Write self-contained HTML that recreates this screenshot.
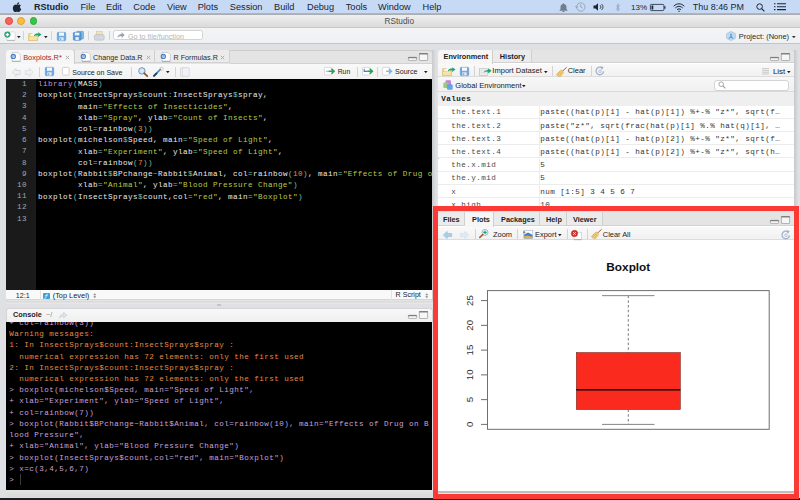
<!DOCTYPE html>
<html><head><meta charset="utf-8"><title>RStudio</title>
<style>
*{margin:0;padding:0;box-sizing:border-box}
html,body{width:800px;height:500px;overflow:hidden;background:#dfe0e4;font-family:"Liberation Sans",sans-serif;position:relative}
.a{position:absolute}
.t{position:absolute;white-space:pre;line-height:1}
svg{position:absolute;overflow:visible}
.code{font-family:"Liberation Mono",monospace;font-size:7.6px;letter-spacing:0.44px;line-height:11.23px;white-space:pre;position:absolute}
.sep{position:absolute;width:1px;background:#d4d4d4}
.ui{font-size:7.3px;color:#222}
.b{font-weight:bold}
</style></head><body>
<div class="a" style="left:0;top:0;width:800px;height:13px;background:#c6daf6"></div><div class="a" style="left:0;top:13px;width:800px;height:1px;background:#a3b6d2"></div><div class="a" style="left:0;top:14px;width:800px;height:1px;background:#acadb1"></div>
<svg style="left:13px;top:1.5px" width="8.5" height="10" viewBox="0 0 17 20"><path d="M12.3 0.5c.1 1.4-.4 2.7-1.2 3.6-.8.9-2 1.6-3.2 1.500-.2-1.300.5-2.700 1.200-3.500C9.900 1.200 11.200.6 12.300.5zM16.400 14.700c-.5 1.100-.7 1.600-1.300 2.500-.9 1.300-2.100 3-3.600 3-1.300 0-1.700-.9-3.500-.9s-2.200.9-3.500.9c-1.500 0-2.600-1.500-3.500-2.800C-1.400 13.700-.6 7.900 2.700 6c1.100-.6 2.300-1 3.300-1 1.300 0 2.100.9 3.300.9 1.100 0 1.800-.9 3.300-.9 1.200 0 2.400.6 3.300 1.700-2.900 1.600-2.400 5.800.5 8z" fill="#1b2633"/></svg>
<div class="t" style="left:34px;top:3.18px;font-size:9.0px;color:#1a2330;font-weight:bold;">RStudio</div>
<div class="t" style="left:80.5px;top:3.01px;font-size:9.2px;color:#1a2330;">File</div>
<div class="t" style="left:106px;top:3.01px;font-size:9.2px;color:#1a2330;">Edit</div>
<div class="t" style="left:133.3px;top:3.01px;font-size:9.2px;color:#1a2330;">Code</div>
<div class="t" style="left:167px;top:3.01px;font-size:9.2px;color:#1a2330;">View</div>
<div class="t" style="left:197.7px;top:3.01px;font-size:9.2px;color:#1a2330;">Plots</div>
<div class="t" style="left:229.8px;top:3.01px;font-size:9.2px;color:#1a2330;">Session</div>
<div class="t" style="left:274px;top:3.01px;font-size:9.2px;color:#1a2330;">Build</div>
<div class="t" style="left:307px;top:3.01px;font-size:9.2px;color:#1a2330;">Debug</div>
<div class="t" style="left:345.7px;top:3.01px;font-size:9.2px;color:#1a2330;">Tools</div>
<div class="t" style="left:378px;top:3.01px;font-size:9.2px;color:#1a2330;">Window</div>
<div class="t" style="left:422.5px;top:3.01px;font-size:9.2px;color:#1a2330;">Help</div>
<svg style="left:559px;top:2.5px" width="9" height="9" viewBox="0 0 9 9"><path d="M4.5 0.3c.4 0 .6.3.6.6 1.500.3 2.400 1.600 2.400 3.200v2.100l1 1.100v.5H.5v-.5l1-1.100V4.100c0-1.600.9-2.900 2.400-3.200 0-.3.200-.6.6-.6zM3.300 8h2.400c0 .6-.5 1-1.200 1S3.300 8.600 3.300 8z" fill="#6f7d8e"/></svg>
<svg style="left:575px;top:2px" width="11" height="10" viewBox="0 0 11 10"><circle cx="5.8" cy="5" r="4.2" fill="none" stroke="#8e9aa8" stroke-width="0.8"/><path d="M5.8 2.300V5l1.800 1.200" fill="none" stroke="#8e9aa8" stroke-width="0.8"/><path d="M0.3 4.200l1.300 1.600 1.300-1.600" fill="none" stroke="#8e9aa8" stroke-width="0.8"/></svg>
<svg style="left:592.5px;top:3px" width="12" height="8" viewBox="0 0 12 8"><path d="M0.5 2.500h2l2.500-2.200v7.400L2.500 5.500h-2z" fill="#1b2633"/><path d="M7 2.200c.6.500.9 1.100.9 1.800s-.3 1.300-.9 1.800M8.600 1c.9.8 1.400 1.900 1.400 3s-.5 2.200-1.400 3" fill="none" stroke="#1b2633" stroke-width="0.8"/></svg>
<svg style="left:615px;top:2.5px" width="6" height="9" viewBox="0 0 6 9"><path d="M1 2.300l3.600 4.100L2.800 8V1l1.800 1.600L1 6.700" fill="none" stroke="#93a0b0" stroke-width="0.8"/></svg>
<div class="t" style="left:631px;top:3.83px;font-size:8.0px;color:#1a2330;">13%</div>
<svg style="left:650px;top:3.5px" width="16" height="7" viewBox="0 0 16 7"><rect x="0.4" y="0.4" width="13.5" height="6.2" rx="1" fill="none" stroke="#1b2633" stroke-width="0.8"/><rect x="1.5" y="1.500" width="1.800" height="4" fill="#1b2633"/><rect x="14.300" y="2.300" width="1.200" height="2.400" fill="#1b2633"/></svg>
<svg style="left:673px;top:2.5px" width="12" height="9" viewBox="0 0 12 9"><path d="M0.600 3.300C3.900 0 8.100 0 11.400 3.300M2.300 5C4.600 2.800 7.400 2.800 9.700 5M4 6.700c1.200-1.100 2.800-1.100 4 0" fill="none" stroke="#1b2633" stroke-width="1"/><circle cx="6" cy="8.200" r="0.7" fill="#1b2633"/></svg>
<div class="t" style="left:692.8px;top:3.12px;font-size:8.95px;color:#1a2330;">Thu 8:46 PM</div>
<svg style="left:756px;top:2.8px" width="9" height="9" viewBox="0 0 9 9"><circle cx="3.600" cy="3.600" r="2.800" fill="none" stroke="#1b2633" stroke-width="1"/><path d="M5.700 5.700L8.400 8.400" stroke="#1b2633" stroke-width="1.200"/></svg>
<svg style="left:774px;top:3.3px" width="12" height="8" viewBox="0 0 12 8"><path d="M0 0.800h1.500M3 0.800h9M0 3.700h1.500M3 3.700h9M0 6.600h1.500M3 6.600h9" stroke="#1b2633" stroke-width="1.100"/></svg>
<div class="a" style="left:0;top:15px;width:800px;height:12.5px;background:linear-gradient(#efefef,#d9d9d9)"></div>
<div class="a" style="left:4.9px;top:17.3px;width:7.8px;height:7.8px;border-radius:50%;background:#fc605b;border:0.5px solid #de4a44"></div>
<div class="a" style="left:17.3px;top:17.3px;width:7.8px;height:7.8px;border-radius:50%;background:#fdbc40;border:0.5px solid #dea034"></div>
<div class="a" style="left:29.700000000000003px;top:17.3px;width:7.8px;height:7.8px;border-radius:50%;background:#34c84a;border:0.5px solid #27aa35"></div>
<div class="t" style="left:384.5px;top:17.27px;font-size:8.3px;color:#4d4d4d;">RStudio</div>
<div class="a" style="left:0;top:27px;width:800px;height:16.6px;background:linear-gradient(#f3f4f5,#eff0f2);border-top:1px solid #c9c9c9;border-bottom:1px solid #c3c4c8"></div>
<svg style="left:3.5px;top:31.3px" width="12" height="10" viewBox="0 0 12 10"><rect x="2.800" y="1" width="8.200" height="8.300" rx="0.600" fill="#fff" stroke="#c2c2c2" stroke-width="0.5"/><path d="M3 9.400h8" stroke="#9a9a9a" stroke-width="0.6"/><circle cx="3.400" cy="3.600" r="3.100" fill="#2aa67c"/><path d="M3.400 2v3.200M1.800 3.600h3.200" stroke="#fff" stroke-width="1.300"/></svg>
<svg style="left:17px;top:35.5px" width="3.6" height="2.2"><path d="M0 0H3.6L1.8 2.2Z" fill="#222"/></svg>
<div class="sep" style="left:23.4px;top:31px;height:9px"></div>
<svg style="left:27.8px;top:32px" width="14" height="9" viewBox="0 0 14 9"><path d="M0.6 1.600h3.400l1 1h4.600v5.900H0.600z" fill="#f0d68e" stroke="#cfae5a" stroke-width="0.4"/><path d="M2.500 2.200h5.500v3H2.500z" fill="#fff"/><path d="M0.2 4.300h9.800l-1 4.200H1z" fill="#f8e3a4" stroke="#cfae5a" stroke-width="0.4"/><path d="M6 3.200c1.200-1.400 2.600-1.800 4.200-1.500V0.300l3.300 2.300-3.300 2.300V3.400C8.800 3.200 7.300 3.500 6 4.200z" fill="#22a36a"/></svg>
<svg style="left:44px;top:35.5px" width="3.6" height="2.2"><path d="M0 0H3.6L1.8 2.2Z" fill="#222"/></svg>
<div class="sep" style="left:50.5px;top:31px;height:9px"></div>
<svg style="left:57px;top:31.8px" width="9" height="9" viewBox="0 0 9 9"><rect x="0.3" y="0.3" width="8.4" height="8.4" rx="1.2" fill="#72a9e0" stroke="#4d86c4" stroke-width="0.5"/><rect x="2" y="0.5" width="5" height="3.3" fill="#f4f8fc"/><rect x="2.4" y="5.3" width="4.2" height="3.2" fill="#e6eef7"/><rect x="3.2" y="6" width="1.1" height="2.2" fill="#72a9e0"/></svg>
<svg style="left:72.5px;top:31px" width="11" height="9.5" viewBox="0 0 11 9.5"><rect x="3.5" y="0.3" width="7" height="7.800" rx="0.8" fill="#7fbde0" stroke="#4d8cc4" stroke-width="0.5"/><rect x="0.3" y="1.300" width="7.800" height="8" rx="1" fill="#5b95d4" stroke="#3f78b8" stroke-width="0.5"/><rect x="1.800" y="1.600" width="4.600" height="2.800" fill="#eef4fb"/><rect x="2.400" y="6" width="3.400" height="3" fill="#dfeaf6"/></svg>
<div class="sep" style="left:87.5px;top:31px;height:9px"></div>
<svg style="left:93.5px;top:31px" width="10.5" height="9.5" viewBox="0 0 10.5 9.5"><rect x="2.3" y="0.3" width="6" height="4" fill="#f1e3b8" stroke="#cbb98a" stroke-width="0.4"/><rect x="0.3" y="3.600" width="9.900" height="5.600" rx="1.600" fill="#d3d8de" stroke="#a9b0b8" stroke-width="0.5"/></svg>
<div class="sep" style="left:108.5px;top:31px;height:9px"></div>
<div class="a" style="left:112.7px;top:30.4px;width:90.5px;height:10px;background:#fff;border:1px solid #d3d3d3;border-radius:2.5px"></div>
<svg style="left:117px;top:32.3px" width="8" height="6.5" viewBox="0 0 8 6.5"><path d="M0.4 6.200C0.8 3.500 2.500 2.100 4.600 2.100V0.300L7.700 3.100 4.600 5.900V4.100C2.800 4 1.500 4.800 0.400 6.200z" fill="#9aa2ac"/></svg>
<div class="t" style="left:128px;top:32.61px;font-size:7.2px;color:#b4b4b4;">Go to file/function</div>
<svg style="left:726px;top:31.3px" width="10" height="10" viewBox="0 0 10 10"><path d="M5 0.300l4.500 2.300v4.800L5 9.700 0.500 7.400V2.600z" fill="#bcd8ef" stroke="#8fb7da" stroke-width="0.4"/><path d="M5 2.600v3.300M5 5.900L2.800 7.500M5 5.900l2.200 1.600" stroke="#3d86c6" stroke-width="1"/></svg>
<div class="t" style="left:738.7px;top:33.15px;font-size:7.5px;color:#2a2a2a;">Project: (None)</div>
<svg style="left:791.5px;top:35.8px" width="3.6" height="2.2"><path d="M0 0H3.6L1.8 2.2Z" fill="#333"/></svg>
<div class="a" style="left:5.5px;top:49.8px;width:427px;height:251px;background:#e4e4e4;border:1px solid #cdcdcd;border-bottom:none;border-radius:3px 3px 0 0"></div>
<div class="a" style="left:6px;top:50.2px;width:69px;height:14px;background:#f6f6f6;border-right:1px solid #cfcfcf;border-radius:3px 3px 0 0"></div>
<div class="a" style="left:75px;top:50.2px;width:80px;height:13.3px;background:#ebebeb;border-right:1px solid #cfcfcf;border-bottom:1px solid #d2d2d2"></div>
<div class="a" style="left:155px;top:50.2px;width:75px;height:13.3px;background:#ebebeb;border-right:1px solid #cfcfcf;border-bottom:1px solid #d2d2d2"></div>
<div class="a" style="left:230px;top:62.6px;width:202px;height:1px;background:#d2d2d2"></div>
<svg style="left:11.2px;top:52.0px" width="10" height="10" viewBox="0 0 10 10"><path d="M1 0.400h6l2.300 2.300v6.600H1z" fill="#fff" stroke="#a8a8a8" stroke-width="0.5"/><path d="M1 9.300h8.300" stroke="#8c8c8c" stroke-width="0.6"/><circle cx="2.300" cy="4.400" r="2.100" fill="#dfe9f5" stroke="#4a7cc0" stroke-width="1.100"/><path d="M1.800 5.600V3.300h0.800c.5 0 .8.3.8.6s-.3.6-.8.6" fill="none" stroke="#3d6fae" stroke-width="0.5"/></svg>
<div class="t" style="left:23.2px;top:53.54px;font-size:7.4px;color:#a81f27;">Boxplots.R*</div>
<svg style="left:65.3px;top:54.8px" width="5" height="5" viewBox="0 0 5 5"><path d="M0.800 0.800l3.400 3.400M4.200 0.800l-3.400 3.400" stroke="#ababab" stroke-width="1"/></svg>
<svg style="left:81.2px;top:52.0px" width="10" height="10" viewBox="0 0 10 10"><path d="M1 0.400h6l2.300 2.300v6.600H1z" fill="#fff" stroke="#a8a8a8" stroke-width="0.5"/><path d="M1 9.300h8.300" stroke="#8c8c8c" stroke-width="0.6"/><circle cx="2.300" cy="4.400" r="2.100" fill="#dfe9f5" stroke="#4a7cc0" stroke-width="1.100"/><path d="M1.800 5.600V3.300h0.800c.5 0 .8.3.8.6s-.3.6-.8.6" fill="none" stroke="#3d6fae" stroke-width="0.5"/></svg>
<div class="t" style="left:93px;top:53.71px;font-size:7.2px;color:#2b2b2b;">Change Data.R</div>
<svg style="left:145.5px;top:54.8px" width="5" height="5" viewBox="0 0 5 5"><path d="M0.800 0.800l3.400 3.400M4.200 0.800l-3.400 3.400" stroke="#ababab" stroke-width="1"/></svg>
<svg style="left:161.2px;top:52.0px" width="10" height="10" viewBox="0 0 10 10"><path d="M1 0.400h6l2.300 2.300v6.600H1z" fill="#fff" stroke="#a8a8a8" stroke-width="0.5"/><path d="M1 9.300h8.300" stroke="#8c8c8c" stroke-width="0.6"/><circle cx="2.300" cy="4.400" r="2.100" fill="#dfe9f5" stroke="#4a7cc0" stroke-width="1.100"/><path d="M1.800 5.600V3.300h0.800c.5 0 .8.3.8.6s-.3.6-.8.6" fill="none" stroke="#3d6fae" stroke-width="0.5"/></svg>
<div class="t" style="left:173.5px;top:53.71px;font-size:7.2px;color:#2b2b2b;">R Formulas.R</div>
<svg style="left:219.5px;top:54.8px" width="5" height="5" viewBox="0 0 5 5"><path d="M0.800 0.800l3.400 3.400M4.200 0.800l-3.400 3.400" stroke="#ababab" stroke-width="1"/></svg>
<svg style="left:408px;top:53.1px" width="20" height="8" viewBox="0 0 20 8"><rect x="0.400" y="4.300" width="8.200" height="3.100" rx="0.500" fill="#fbfbfb" stroke="#9a9a9a" stroke-width="0.700"/><rect x="0.100" y="3.900" width="8.800" height="1.400" rx="0.500" fill="#808080"/><rect x="11.400" y="0.500" width="8.200" height="7" rx="0.500" fill="#f6f6f6" stroke="#9a9a9a" stroke-width="0.700"/><rect x="11.100" y="0.100" width="8.800" height="1.500" rx="0.500" fill="#808080"/></svg>
<div class="a" style="left:6px;top:63.8px;width:426px;height:15px;background:linear-gradient(#f9f9f9,#f1f1f1)"></div>
<svg style="left:12.4px;top:67.5px" width="8.5" height="8" viewBox="0 0 8.5 8"><path d="M0.4 4L4 0.5v2h4.100v4H4v2z" fill="#eef0f2" stroke="#c2c7cc" stroke-width="0.6"/></svg>
<svg style="left:24.8px;top:67.5px" width="8.5" height="8" viewBox="0 0 8.5 8"><path d="M8.100 4L4.500 0.500v2H0.400v4h4.100v2z" fill="#eef0f2" stroke="#d0d4d8" stroke-width="0.6"/></svg>
<div class="sep" style="left:39.3px;top:66.5px;height:10px"></div>
<svg style="left:45.4px;top:67.3px" width="9" height="9" viewBox="0 0 9 9"><rect x="0.3" y="0.3" width="8.4" height="8.4" rx="1.2" fill="#72a9e0" stroke="#4d86c4" stroke-width="0.5"/><rect x="2" y="0.5" width="5" height="3.3" fill="#f4f8fc"/><rect x="2.4" y="5.3" width="4.2" height="3.2" fill="#e6eef7"/><rect x="3.2" y="6" width="1.1" height="2.2" fill="#72a9e0"/></svg>
<svg style="left:62.3px;top:67px" width="7.5" height="8.5" viewBox="0 0 7.5 8.5"><rect x="0.400" y="0.400" width="6.700" height="7.700" rx="1.200" fill="#fff" stroke="#b4b4b4" stroke-width="0.6"/></svg>
<div class="t" style="left:72.3px;top:68.63px;font-size:7.05px;color:#222;">Source on Save</div>
<div class="sep" style="left:131px;top:66.5px;height:10px"></div>
<svg style="left:137.5px;top:66.8px" width="10" height="10" viewBox="0 0 10 10"><circle cx="3.900" cy="3.900" r="3.200" fill="#d5e7f7" stroke="#5d89b5" stroke-width="0.9"/><path d="M6.200 6.200l3 3" stroke="#8a5a2c" stroke-width="1.800" stroke-linecap="round"/></svg>
<svg style="left:153px;top:66.3px" width="11" height="10.5" viewBox="0 0 11 10.5"><path d="M1 9.800L7.300 3.500" stroke="#3b85c8" stroke-width="1.700" stroke-linecap="round"/><path d="M1 9.800L3.500 7.300" stroke="#2a3c55" stroke-width="1.700" stroke-linecap="round"/><path d="M8.600 0.400v1.600M8.600 3.600v1.600M6.200 2.800h1.600M9.400 2.800h1.600M6.900 1.100l.8.8M9.500 3.700l.8.8M10.300 1.100l-.8.8" stroke="#f2a078" stroke-width="0.6"/></svg>
<svg style="left:165.5px;top:71px" width="3.6" height="2.2"><path d="M0 0H3.6L1.8 2.2Z" fill="#222"/></svg>
<div class="sep" style="left:175px;top:66.5px;height:10px"></div>
<svg style="left:180px;top:66.5px" width="10" height="10" viewBox="0 0 10 10"><rect x="0.500" y="0.700" width="8.800" height="8.600" rx="1.200" fill="#eef2f8" stroke="#c4c8ce" stroke-width="0.6"/><path d="M2.300 0.700v8.600" stroke="#e3a6a6" stroke-width="0.4"/></svg>
<svg style="left:323.5px;top:67.4px" width="13" height="8.5" viewBox="0 0 13 8.5"><rect x="0.400" y="0.400" width="7.400" height="7.600" rx="0.800" fill="#fff" stroke="#b8b8b8" stroke-width="0.5"/><path d="M1.800 4.200h3" stroke="#8fb8e0" stroke-width="1.100"/><path d="M4.600 4.200h4.300M7.400 1.700l2.700 2.500-2.700 2.500" fill="none" stroke="#25a24a" stroke-width="1.500"/></svg>
<div class="t" style="left:337.7px;top:68.84px;font-size:6.8px;color:#222;">Run</div>
<div class="sep" style="left:356.7px;top:66.5px;height:10px"></div>
<svg style="left:361.5px;top:67.4px" width="12.5" height="8.5" viewBox="0 0 12.5 8.5"><rect x="0.400" y="0.400" width="7.400" height="7.600" rx="0.800" fill="#fff" stroke="#b8b8b8" stroke-width="0.5"/><path d="M2.200 1.800v2.600h3" fill="none" stroke="#3b7fc4" stroke-width="1.100"/><path d="M5.200 4.300h4.300M7.800 1.800l2.600 2.500-2.600 2.500" fill="none" stroke="#25a24a" stroke-width="1.500"/></svg>
<div class="sep" style="left:377.3px;top:66.5px;height:10px"></div>
<svg style="left:381.5px;top:67.4px" width="12.5" height="8.5" viewBox="0 0 12.5 8.5"><rect x="0.400" y="0.400" width="7.400" height="7.600" rx="0.800" fill="#fff" stroke="#b8b8b8" stroke-width="0.5"/><path d="M4.200 4.200h4.300M6.900 1.800l2.600 2.400-2.600 2.400" fill="none" stroke="#7fb6e6" stroke-width="1.500"/></svg>
<div class="t" style="left:395px;top:68.59px;font-size:7.1px;color:#222;">Source</div>
<svg style="left:424.3px;top:71px" width="3.6" height="2.2"><path d="M0 0H3.6L1.8 2.2Z" fill="#222"/></svg>
<div class="a" style="left:6px;top:290px;width:426px;height:10.2px;background:#f9f9f9;border-bottom:1px solid #d6d6d6"></div>
<div class="a" style="left:6px;top:300.5px;width:426px;height:3px;background:linear-gradient(#d8d8d8,#e9e9e9)"></div>
<div class="t" style="left:15.8px;top:292.41px;font-size:7.2px;color:#1e1e1e;">12:1</div>
<div class="sep" style="left:39.6px;top:290px;height:10px;background:#e2e2e2"></div>
<div class="a" style="left:42.9px;top:292.6px;width:6.8px;height:6px;background:#3aa3d8;border-radius:1px"></div>
<svg style="left:42.9px;top:292.6px" width="7" height="6.2" viewBox="0 0 7 6.2"><path d="M4.900 1.300c-.5-.3-1.100-.1-1.300.5L2.500 5.200c-.2.600-.7.800-1.200.6M2.300 2.600h2.200" fill="none" stroke="#fff" stroke-width="0.7"/></svg>
<div class="t" style="left:52.7px;top:292.04px;font-size:7.4px;color:#222;">(Top Level)</div>
<svg style="left:93px;top:292.8px" width="3.5" height="5.5" viewBox="0 0 3.5 5.5"><path d="M0.200 2.200L1.750 0.300 3.300 2.200zM0.200 3.300L1.750 5.200 3.300 3.300z" fill="#8a8a8a"/></svg>
<div class="sep" style="left:391.2px;top:290px;height:10px;background:#e2e2e2"></div>
<div class="t" style="left:395.6px;top:292.29px;font-size:7.1px;color:#222;">R Script</div>
<svg style="left:424.5px;top:292.8px" width="3.5" height="5.5" viewBox="0 0 3.5 5.5"><path d="M0.200 2.200L1.750 0.300 3.300 2.200zM0.200 3.300L1.750 5.200 3.300 3.300z" fill="#8a8a8a"/></svg>
<div class="a" style="left:6px;top:79px;width:426px;height:211px;background:#000;overflow:hidden">
<div class="a" style="left:0;top:0;width:29.8px;height:211px;background:#1a1a1a"></div>
<div class="code" style="left:0;top:-0.1px;width:21px;text-align:right;color:#a4a7ae">1
2
3
4
5
6
7
8
9
10
11
12
13</div>
<div class="code" style="left:32px;top:0.2px;color:#eaeaea"><span style="color:#c397d8">library</span><span style="color:#70c0b1">(</span>MASS<span style="color:#70c0b1">)</span>
boxplot<span style="color:#70c0b1">(</span>InsectSprays<span style="color:#70c0b1">$</span>count<span style="color:#70c0b1">:</span>InsectSprays<span style="color:#70c0b1">$</span>spray,
        main<span style="color:#70c0b1">=</span><span style="color:#b9ca4a">"Effects of Insecticides"</span>,
        xlab<span style="color:#70c0b1">=</span><span style="color:#b9ca4a">"Spray"</span>, ylab<span style="color:#70c0b1">=</span><span style="color:#b9ca4a">"Count of Insects"</span>,
        col<span style="color:#70c0b1">=</span>rainbow<span style="color:#70c0b1">(</span><span style="color:#e78c45">3</span><span style="color:#70c0b1">))</span>
boxplot<span style="color:#70c0b1">(</span>michelson<span style="color:#70c0b1">$</span>Speed, main<span style="color:#70c0b1">=</span><span style="color:#b9ca4a">"Speed of Light"</span>,
        xlab<span style="color:#70c0b1">=</span><span style="color:#b9ca4a">"Experiment"</span>, ylab<span style="color:#70c0b1">=</span><span style="color:#b9ca4a">"Speed of Light"</span>,
        col<span style="color:#70c0b1">=</span>rainbow<span style="color:#70c0b1">(</span><span style="color:#e78c45">7</span><span style="color:#70c0b1">))</span>
boxplot<span style="color:#70c0b1">(</span>Rabbit<span style="color:#70c0b1">$</span>BPchange<span style="color:#70c0b1">~</span>Rabbit<span style="color:#70c0b1">$</span>Animal, col<span style="color:#70c0b1">=</span>rainbow<span style="color:#70c0b1">(</span><span style="color:#e78c45">10</span><span style="color:#70c0b1">)</span>, main<span style="color:#70c0b1">=</span><span style="color:#b9ca4a">"Effects of Drug on Blood Pressure"</span>,
        xlab<span style="color:#70c0b1">=</span><span style="color:#b9ca4a">"Animal"</span>, ylab<span style="color:#70c0b1">=</span><span style="color:#b9ca4a">"Blood Pressure Change"</span><span style="color:#70c0b1">)</span>
boxplot<span style="color:#70c0b1">(</span>InsectSprays<span style="color:#70c0b1">$</span>count,col<span style="color:#70c0b1">=</span><span style="color:#b9ca4a">"red"</span>, main<span style="color:#70c0b1">=</span><span style="color:#b9ca4a">"Boxplot"</span><span style="color:#70c0b1">)</span></div>
</div>
<div class="a" style="left:5.5px;top:307.7px;width:427px;height:14px;background:linear-gradient(#f8f8f8,#efefef);border:1px solid #d4d4d4;border-bottom:none;border-radius:3px 3px 0 0"></div>
<div class="t" style="left:13px;top:311.32px;font-size:7.3px;color:#1e1e1e;font-weight:bold;">Console</div>
<div class="t" style="left:46px;top:311.32px;font-size:7.3px;color:#8c8c8c;">~/</div>
<svg style="left:59.4px;top:311.6px" width="8.5" height="6.5" viewBox="0 0 8.5 6.5"><path d="M0.400 6.200C0.800 3.500 2.500 2.100 4.600 2.100V0.300L8 3.100 4.600 5.900V4.100C2.800 4 1.500 4.800 0.400 6.200z" fill="#dfe6ee" stroke="#b7c2cf" stroke-width="0.5"/></svg>
<svg style="left:408px;top:311px" width="20" height="8" viewBox="0 0 20 8"><rect x="0.400" y="4.300" width="8.200" height="3.100" rx="0.500" fill="#fbfbfb" stroke="#9a9a9a" stroke-width="0.700"/><rect x="0.100" y="3.900" width="8.800" height="1.400" rx="0.500" fill="#808080"/><rect x="11.400" y="0.500" width="8.200" height="7" rx="0.500" fill="#f6f6f6" stroke="#9a9a9a" stroke-width="0.700"/><rect x="11.100" y="0.100" width="8.800" height="1.500" rx="0.500" fill="#808080"/></svg>
<div class="a" style="left:6px;top:321.7px;width:426px;height:168.5px;background:#000;overflow:hidden">
<div class="code" style="left:3.3px;top:-3.9px;color:#c9a1dc"><span style="color:#c9a1dc">+ col=rainbow(3))</span>
<span style="color:#e38b47">Warning messages:</span>
<span style="color:#e38b47">1: In InsectSprays$count:InsectSprays$spray :</span>
<span style="color:#e38b47">  numerical expression has 72 elements: only the first used</span>
<span style="color:#e38b47">2: In InsectSprays$count:InsectSprays$spray :</span>
<span style="color:#e38b47">  numerical expression has 72 elements: only the first used</span>
<span style="color:#c9a1dc">&gt; boxplot(michelson$Speed, main="Speed of Light",</span>
<span style="color:#c9a1dc">+ xlab="Experiment", ylab="Speed of Light",</span>
<span style="color:#c9a1dc">+ col=rainbow(7))</span>
<span style="color:#c9a1dc">&gt; boxplot(Rabbit$BPchange~Rabbit$Animal, col=rainbow(10), main="Effects of Drug on B</span>
<span style="color:#c9a1dc">lood Pressure",</span>
<span style="color:#c9a1dc">+ xlab="Animal", ylab="Blood Pressure Change")</span>
<span style="color:#c9a1dc">&gt; boxplot(InsectSprays$count,col="red", main="Boxplot")</span>
<span style="color:#c9a1dc">&gt; x=c(3,4,5,6,7)</span>
<span style="color:#c9a1dc">&gt; </span></div>
<div class="a" style="left:13.6px;top:152.5px;width:1px;height:11.3px;background:#3a3a3a"></div>
</div>
<div class="a" style="left:6px;top:490.2px;width:426px;height:7.3px;background:linear-gradient(#e4e4e4,#dadada)"></div>
<div class="a" style="left:437.6px;top:49.8px;width:357px;height:160px;background:#fff;border:1px solid #cdcdcd;border-radius:3px 3px 0 0"></div>
<div class="a" style="left:438px;top:50.2px;width:356px;height:13.3px;background:#e4e4e4;border-bottom:1px solid #d2d2d2;border-radius:3px 3px 0 0"></div>
<div class="a" style="left:438px;top:50.2px;width:55.3px;height:14px;background:#f6f6f6;border-right:1px solid #cfcfcf;border-radius:3px 0 0 0"></div>
<div class="a" style="left:493.3px;top:50.2px;width:38.3px;height:13.3px;background:#ebebeb;border-right:1px solid #cfcfcf;border-bottom:1px solid #d2d2d2"></div>
<div class="t" style="left:443.5px;top:52.80px;font-size:7.33px;color:#1e1e1e;font-weight:bold;">Environment</div>
<div class="t" style="left:499.8px;top:52.80px;font-size:7.33px;color:#1e1e1e;font-weight:bold;">History</div>
<svg style="left:770px;top:53.4px" width="20" height="8" viewBox="0 0 20 8"><rect x="0.400" y="4.300" width="8.200" height="3.100" rx="0.500" fill="#fbfbfb" stroke="#9a9a9a" stroke-width="0.700"/><rect x="0.100" y="3.900" width="8.800" height="1.400" rx="0.500" fill="#808080"/><rect x="11.400" y="0.500" width="8.200" height="7" rx="0.500" fill="#f6f6f6" stroke="#9a9a9a" stroke-width="0.700"/><rect x="11.100" y="0.100" width="8.800" height="1.500" rx="0.500" fill="#808080"/></svg>
<div class="a" style="left:438px;top:63.5px;width:356px;height:13.5px;background:linear-gradient(#f9f9f9,#f1f1f1);border-bottom:1px solid #dcdcdc"></div>
<svg style="left:442px;top:66.7px" width="14" height="9" viewBox="0 0 14 9"><path d="M0.6 1.600h3.400l1 1h4.600v5.900H0.600z" fill="#f0d68e" stroke="#cfae5a" stroke-width="0.4"/><path d="M2.500 2.200h5.500v3H2.500z" fill="#fff"/><path d="M0.2 4.300h9.800l-1 4.200H1z" fill="#f8e3a4" stroke="#cfae5a" stroke-width="0.4"/><path d="M6 3.200c1.200-1.400 2.600-1.800 4.200-1.500V0.300l3.300 2.300-3.300 2.300V3.400C8.800 3.200 7.300 3.500 6 4.200z" fill="#22a36a"/></svg>
<svg style="left:460px;top:67px" width="9" height="9" viewBox="0 0 9 9"><rect x="0.3" y="0.3" width="8.4" height="8.4" rx="1.2" fill="#72a9e0" stroke="#4d86c4" stroke-width="0.5"/><rect x="2" y="0.5" width="5" height="3.3" fill="#f4f8fc"/><rect x="2.4" y="5.3" width="4.2" height="3.2" fill="#e6eef7"/><rect x="3.2" y="6" width="1.1" height="2.2" fill="#72a9e0"/></svg>
<div class="sep" style="left:474px;top:66px;height:10px"></div>
<svg style="left:478.5px;top:66.5px" width="13" height="9" viewBox="0 0 13 9"><rect x="0.400" y="1.800" width="8" height="6.800" fill="#f3f3f3" stroke="#a8a8a8" stroke-width="0.5"/><path d="M0.400 3.800h8M0.400 5.800h8M3 1.800v6.800M5.600 1.800v6.800" stroke="#cfcfcf" stroke-width="0.4"/><path d="M4.500 5.500c1-1.800 2.600-2.600 4.600-2.600V1.200l3.500 2.600-3.500 2.600V4.600C7.500 4.600 6 4.900 4.500 5.500z" fill="#22a36a"/></svg>
<div class="t" style="left:492.3px;top:67.11px;font-size:7.55px;color:#222;">Import Dataset</div>
<svg style="left:544px;top:70.8px" width="3.6" height="2.2"><path d="M0 0H3.6L1.8 2.2Z" fill="#222"/></svg>
<div class="sep" style="left:551.7px;top:66px;height:10px"></div>
<svg style="left:555.6px;top:66.5px" width="11" height="10" viewBox="0 0 11 10"><path d="M10.600 0.300L6.300 4.400" stroke="#b4572f" stroke-width="1"/><path d="M6.900 3.700L5 2.900 0.300 7.600c1 1.300 2.600 2.200 4 2.300L7.500 5.800z" fill="#f0cf78" stroke="#c79a3c" stroke-width="0.4"/><path d="M1.500 8.400l4-4M3 9.400l3.400-4.200M0.900 7.300l3.800-3.800" stroke="#c79a3c" stroke-width="0.4"/></svg>
<div class="t" style="left:567.7px;top:67.15px;font-size:7.5px;color:#222;">Clear</div>
<div class="sep" style="left:590.7px;top:66px;height:10px"></div>
<svg style="left:595px;top:66.2px" width="10" height="10" viewBox="0 0 10 10"><path d="M8.600 5.400A3.800 3.800 0 1 1 6.500 1.500" fill="none" stroke="#9fb2ca" stroke-width="1.300"/><path d="M5.200 0.200l3.600 0.800-2 3z" fill="#9fb2ca"/><circle cx="5" cy="5.200" r="1.300" fill="none" stroke="#9fb2ca" stroke-width="0.7"/></svg>
<svg style="left:762px;top:68.2px" width="7" height="6.5" viewBox="0 0 7 6.5"><path d="M0 0.600h7M0 2.400h7M0 4.200h7M0 6h7" stroke="#c9c9c9" stroke-width="1"/></svg>
<div class="t" style="left:772.9px;top:67.63px;font-size:8.0px;color:#222;">List</div>
<svg style="left:787.3px;top:71.3px" width="3.6" height="2.2"><path d="M0 0H3.6L1.8 2.2Z" fill="#222"/></svg>
<div class="a" style="left:438px;top:77px;width:356px;height:15.3px;background:linear-gradient(#f7f7f7,#f0f0f0);border-bottom:1px solid #dadada"></div>
<svg style="left:443px;top:80px" width="10" height="10" viewBox="0 0 10 10"><rect x="2.500" y="0.300" width="5.500" height="5.500" rx="1.200" fill="#c27fdc"/><rect x="0.300" y="2.600" width="5.500" height="5.500" rx="1.200" fill="#9ccb7c"/><rect x="4" y="4.200" width="5.700" height="5.500" rx="1.200" fill="#5f9ee6" opacity="0.95"/></svg>
<div class="t" style="left:455.3px;top:82.41px;font-size:7.55px;color:#222;">Global Environment</div>
<svg style="left:522px;top:85.4px" width="3.6" height="2.2"><path d="M0 0H3.6L1.8 2.2Z" fill="#222"/></svg>
<div class="a" style="left:714.4px;top:79.5px;width:74.4px;height:11px;background:#fff;border:1px solid #d3d3d3;border-radius:3px"></div>
<svg style="left:718px;top:81.2px" width="8" height="8" viewBox="0 0 8 8"><circle cx="3.200" cy="3.200" r="2.300" fill="none" stroke="#9c9c9c" stroke-width="0.9"/><path d="M4.900 4.900L7.400 7.400" stroke="#9c9c9c" stroke-width="1.200"/></svg>
<div class="a" style="left:438px;top:92.3px;width:356px;height:13.4px;background:#efefef"></div>
<div class="code" style="left:441.2px;top:94.2px;font-weight:bold;color:#222">Values</div>
<div class="a" style="left:438px;top:105.7px;width:356px;height:13.2px;background:#fff;border-bottom:1px solid #ececec"></div>
<div class="a" style="left:539px;top:105.7px;width:1px;height:13.2px;background:#ececec"></div>
<div class="code" style="left:451.2px;top:107.30px;color:#4a4a4a">the.text.1</div>
<div class="code" style="left:540.3px;top:107.30px;color:#333">paste((hat(p)[1] - hat(p)[1]) %+-% "z*", sqrt(f…</div>
<div class="a" style="left:438px;top:118.9px;width:356px;height:13.2px;background:#fff;border-bottom:1px solid #ececec"></div>
<div class="a" style="left:539px;top:118.9px;width:1px;height:13.2px;background:#ececec"></div>
<div class="code" style="left:451.2px;top:120.50px;color:#4a4a4a">the.text.2</div>
<div class="code" style="left:540.3px;top:120.50px;color:#333">paste("z*", sqrt(frac(hat(p)[1] %.% hat(q)[1], …</div>
<div class="a" style="left:438px;top:132.1px;width:356px;height:13.2px;background:#fff;border-bottom:1px solid #ececec"></div>
<div class="a" style="left:539px;top:132.1px;width:1px;height:13.2px;background:#ececec"></div>
<div class="code" style="left:451.2px;top:133.70px;color:#4a4a4a">the.text.3</div>
<div class="code" style="left:540.3px;top:133.70px;color:#333">paste((hat(p)[1] - hat(p)[2]) %+-% "z*", sqrt(f…</div>
<div class="a" style="left:438px;top:145.3px;width:356px;height:13.2px;background:#fff;border-bottom:1px solid #ececec"></div>
<div class="a" style="left:539px;top:145.3px;width:1px;height:13.2px;background:#ececec"></div>
<div class="code" style="left:451.2px;top:146.90px;color:#4a4a4a">the.text.4</div>
<div class="code" style="left:540.3px;top:146.90px;color:#333">paste((hat(p)[1] - hat(p)[2]) %+-% "z*", sqrt(h…</div>
<div class="a" style="left:438px;top:158.5px;width:356px;height:13.2px;background:#fff;border-bottom:1px solid #ececec"></div>
<div class="a" style="left:539px;top:158.5px;width:1px;height:13.2px;background:#ececec"></div>
<div class="code" style="left:451.2px;top:160.10px;color:#4a4a4a">the.x.mid</div>
<div class="code" style="left:540.3px;top:160.10px;color:#333">5</div>
<div class="a" style="left:438px;top:171.7px;width:356px;height:13.2px;background:#fff;border-bottom:1px solid #ececec"></div>
<div class="a" style="left:539px;top:171.7px;width:1px;height:13.2px;background:#ececec"></div>
<div class="code" style="left:451.2px;top:173.30px;color:#4a4a4a">the.y.mid</div>
<div class="code" style="left:540.3px;top:173.30px;color:#333">5</div>
<div class="a" style="left:438px;top:184.89999999999998px;width:356px;height:13.2px;background:#fff;border-bottom:1px solid #ececec"></div>
<div class="a" style="left:539px;top:184.89999999999998px;width:1px;height:13.2px;background:#ececec"></div>
<div class="code" style="left:451.2px;top:186.50px;color:#4a4a4a">x</div>
<div class="code" style="left:540.3px;top:186.50px;color:#333">num [1:5] 3 4 5 6 7</div>
<div class="a" style="left:438px;top:198.1px;width:356px;height:13.2px;background:#fff;border-bottom:1px solid #ececec"></div>
<div class="a" style="left:539px;top:198.1px;width:1px;height:13.2px;background:#ececec"></div>
<div class="code" style="left:451.2px;top:199.70px;color:#4a4a4a">x.high</div>
<div class="code" style="left:540.3px;top:199.70px;color:#333">10</div>
<div class="a" style="left:438px;top:212px;width:356px;height:282px;background:#fff"></div>
<div class="a" style="left:438px;top:212px;width:356px;height:14.3px;background:#e4e4e4;border-bottom:1px solid #d2d2d2"></div>
<div class="a" style="left:438px;top:212px;width:27.30000000000001px;height:14.3px;background:#ebebeb;border-right:1px solid #cfcfcf;border-bottom:1px solid #d2d2d2"></div>
<div class="t" style="left:443px;top:216.10px;font-size:7.33px;color:#1e1e1e;font-weight:bold;">Files</div>
<div class="a" style="left:465.3px;top:212px;width:28.69999999999999px;height:15px;background:#f6f6f6;border-right:1px solid #cfcfcf"></div>
<div class="t" style="left:472px;top:216.10px;font-size:7.33px;color:#1e1e1e;font-weight:bold;">Plots</div>
<div class="a" style="left:494px;top:212px;width:45.60000000000002px;height:14.3px;background:#ebebeb;border-right:1px solid #cfcfcf;border-bottom:1px solid #d2d2d2"></div>
<div class="t" style="left:501px;top:216.10px;font-size:7.33px;color:#1e1e1e;font-weight:bold;">Packages</div>
<div class="a" style="left:539.6px;top:212px;width:27.0px;height:14.3px;background:#ebebeb;border-right:1px solid #cfcfcf;border-bottom:1px solid #d2d2d2"></div>
<div class="t" style="left:546px;top:216.10px;font-size:7.33px;color:#1e1e1e;font-weight:bold;">Help</div>
<div class="a" style="left:566.6px;top:212px;width:36.0px;height:14.3px;background:#ebebeb;border-right:1px solid #cfcfcf;border-bottom:1px solid #d2d2d2"></div>
<div class="t" style="left:573px;top:216.10px;font-size:7.33px;color:#1e1e1e;font-weight:bold;">Viewer</div>
<svg style="left:770px;top:216.2px" width="20" height="8" viewBox="0 0 20 8"><rect x="0.400" y="4.300" width="8.200" height="3.100" rx="0.500" fill="#fbfbfb" stroke="#9a9a9a" stroke-width="0.700"/><rect x="0.100" y="3.900" width="8.800" height="1.400" rx="0.500" fill="#808080"/><rect x="11.400" y="0.500" width="8.200" height="7" rx="0.500" fill="#f6f6f6" stroke="#9a9a9a" stroke-width="0.700"/><rect x="11.100" y="0.100" width="8.800" height="1.500" rx="0.500" fill="#808080"/></svg>
<div class="a" style="left:438px;top:226.5px;width:356px;height:13.5px;background:linear-gradient(#f9f9f9,#f1f1f1);border-bottom:1px solid #dcdcdc"></div>
<svg style="left:443px;top:230.8px" width="9" height="8" viewBox="0 0 9 8"><path d="M0.300 4L4.200 0.400v2.100h4.500v3H4.200v2.100z" fill="#a8d0ec" stroke="#7fb0d6" stroke-width="0.5"/></svg>
<svg style="left:460.3px;top:230.8px" width="9" height="8" viewBox="0 0 9 8"><path d="M8.700 4L4.800 0.400v2.100H0.300v3h4.500v2.100z" fill="#dcebf6" stroke="#c4dbee" stroke-width="0.5"/></svg>
<div class="sep" style="left:474.5px;top:229px;height:10px"></div>
<svg style="left:479.3px;top:229.4px" width="10" height="9" viewBox="0 0 10 9"><circle cx="6" cy="3.400" r="3" fill="#e3f1fb" stroke="#8aa2b8" stroke-width="0.7"/><path d="M6 1.700v3.400M4.300 3.400h3.400" stroke="#1aa36b" stroke-width="1.100"/><path d="M3.800 5.600L0.800 8.400" stroke="#a0622c" stroke-width="1.600" stroke-linecap="round"/></svg>
<div class="t" style="left:493px;top:231.21px;font-size:7.43px;color:#222;">Zoom</div>
<div class="sep" style="left:517.4px;top:229px;height:10px"></div>
<svg style="left:522.5px;top:229.8px" width="10" height="9" viewBox="0 0 10 9"><rect x="0.800" y="0.400" width="9" height="8" fill="#fff" stroke="#9ba7b3" stroke-width="0.5"/><path d="M1.200 4.500L5 2.500l4.400 2.300v3.400H1.200z" fill="#3e7fd0"/><path d="M1.200 6.600l3-1.200 5.200 1.400v1.400H1.200z" fill="#e4b04a"/><path d="M0 2.300h2.600M1.300 1v2.600" stroke="#555" stroke-width="0.6"/></svg>
<div class="t" style="left:535px;top:231.19px;font-size:7.45px;color:#222;">Export</div>
<svg style="left:558.2px;top:234.3px" width="3.6" height="2.2"><path d="M0 0H3.6L1.8 2.2Z" fill="#222"/></svg>
<div class="sep" style="left:566.5px;top:229px;height:10px"></div>
<svg style="left:571px;top:229.5px" width="11" height="10" viewBox="0 0 11 10"><rect x="3" y="2.200" width="7.600" height="7.400" fill="#fff" stroke="#b8b8b8" stroke-width="0.5"/><path d="M3 9.700h7.600" stroke="#8a8a8a" stroke-width="0.6"/><circle cx="3.500" cy="3.500" r="3.200" fill="#d9302c"/><circle cx="3.500" cy="3.500" r="3.200" fill="none" stroke="#a81d1d" stroke-width="0.4"/><path d="M2.300 2.300l2.400 2.400M4.700 2.300L2.300 4.700" stroke="#fff" stroke-width="1"/></svg>
<div class="sep" style="left:586.5px;top:229px;height:10px"></div>
<svg style="left:590.5px;top:229.3px" width="11" height="10" viewBox="0 0 11 10"><path d="M10.600 0.300L6.300 4.400" stroke="#b4572f" stroke-width="1"/><path d="M6.900 3.700L5 2.900 0.300 7.600c1 1.300 2.600 2.200 4 2.300L7.500 5.800z" fill="#f0cf78" stroke="#c79a3c" stroke-width="0.4"/><path d="M1.500 8.400l4-4M3 9.400l3.400-4.200M0.900 7.300l3.800-3.800" stroke="#c79a3c" stroke-width="0.4"/></svg>
<div class="t" style="left:602.8px;top:231.22px;font-size:7.42px;color:#222;">Clear All</div>
<svg style="left:781px;top:229.6px" width="10" height="10" viewBox="0 0 10 10"><path d="M8.600 5.400A3.800 3.800 0 1 1 6.500 1.500" fill="none" stroke="#9fb2ca" stroke-width="1.300"/><path d="M5.200 0.200l3.600 0.800-2 3z" fill="#9fb2ca"/><circle cx="5" cy="5.200" r="1.300" fill="none" stroke="#9fb2ca" stroke-width="0.7"/></svg>
<svg style="left:0;top:0" width="800" height="500" viewBox="0 0 800 500"><rect x="487.5" y="290.6" width="281.7" height="138.7" fill="none" stroke="#6e6e6e" stroke-width="1"/><path d="M481 424.40H487.5" stroke="#6e6e6e" stroke-width="1"/><text transform="translate(473.3 424.40) rotate(-90)" text-anchor="middle" font-family="Liberation Sans" font-size="9.6" fill="#2e2e2e">0</text><path d="M481 399.64H487.5" stroke="#6e6e6e" stroke-width="1"/><text transform="translate(473.3 399.64) rotate(-90)" text-anchor="middle" font-family="Liberation Sans" font-size="9.6" fill="#2e2e2e">5</text><path d="M481 374.88H487.5" stroke="#6e6e6e" stroke-width="1"/><text transform="translate(473.3 374.88) rotate(-90)" text-anchor="middle" font-family="Liberation Sans" font-size="9.6" fill="#2e2e2e">10</text><path d="M481 350.12H487.5" stroke="#6e6e6e" stroke-width="1"/><text transform="translate(473.3 350.12) rotate(-90)" text-anchor="middle" font-family="Liberation Sans" font-size="9.6" fill="#2e2e2e">15</text><path d="M481 325.36H487.5" stroke="#6e6e6e" stroke-width="1"/><text transform="translate(473.3 325.36) rotate(-90)" text-anchor="middle" font-family="Liberation Sans" font-size="9.6" fill="#2e2e2e">20</text><path d="M481 300.60H487.5" stroke="#6e6e6e" stroke-width="1"/><text transform="translate(473.3 300.60) rotate(-90)" text-anchor="middle" font-family="Liberation Sans" font-size="9.6" fill="#2e2e2e">25</text><rect x="576.3" y="352.60" width="104" height="56.95" fill="#fa2a1f" stroke="#7a2a20" stroke-width="0.6"/><path d="M576.3 389.74H680.3" stroke="#000" stroke-width="1.6"/><path d="M628.3 295.65V352.60M628.3 409.54V424.40" stroke="#555" stroke-width="0.8" stroke-dasharray="2.5 2.2"/><path d="M602 295.65H654.5M602 424.40H654.5" stroke="#777" stroke-width="0.9"/><text x="628.3" y="270.8" text-anchor="middle" font-family="Liberation Sans" font-size="11.8" font-weight="bold" fill="#111">Boxplot</text></svg>
<div class="a" style="left:438px;top:491.3px;width:356px;height:1.5px;background:#bdbdbd"></div>
<div class="a" style="left:438px;top:492.8px;width:356px;height:1.5px;background:#dfe6ea"></div>
<div class="a" style="left:432px;top:50px;width:5.5px;height:157px;background:linear-gradient(90deg,#c9cace,#dcdde1 60%,#e2e3e6)"></div><div class="a" style="left:794.3px;top:50px;width:4px;height:157px;background:linear-gradient(90deg,#c7c8cc,#dcdde1)"></div><div class="a" style="left:217px;top:303.5px;width:4px;height:2px;background:#c3c4c9"></div><div class="a" style="left:0;top:497.5px;width:800px;height:2.5px;background:#1d1d24"></div>
<div class="a" style="left:432.6px;top:206.2px;width:366.6px;height:293px;border:5.2px solid #fc3a35"></div>
</body></html>
